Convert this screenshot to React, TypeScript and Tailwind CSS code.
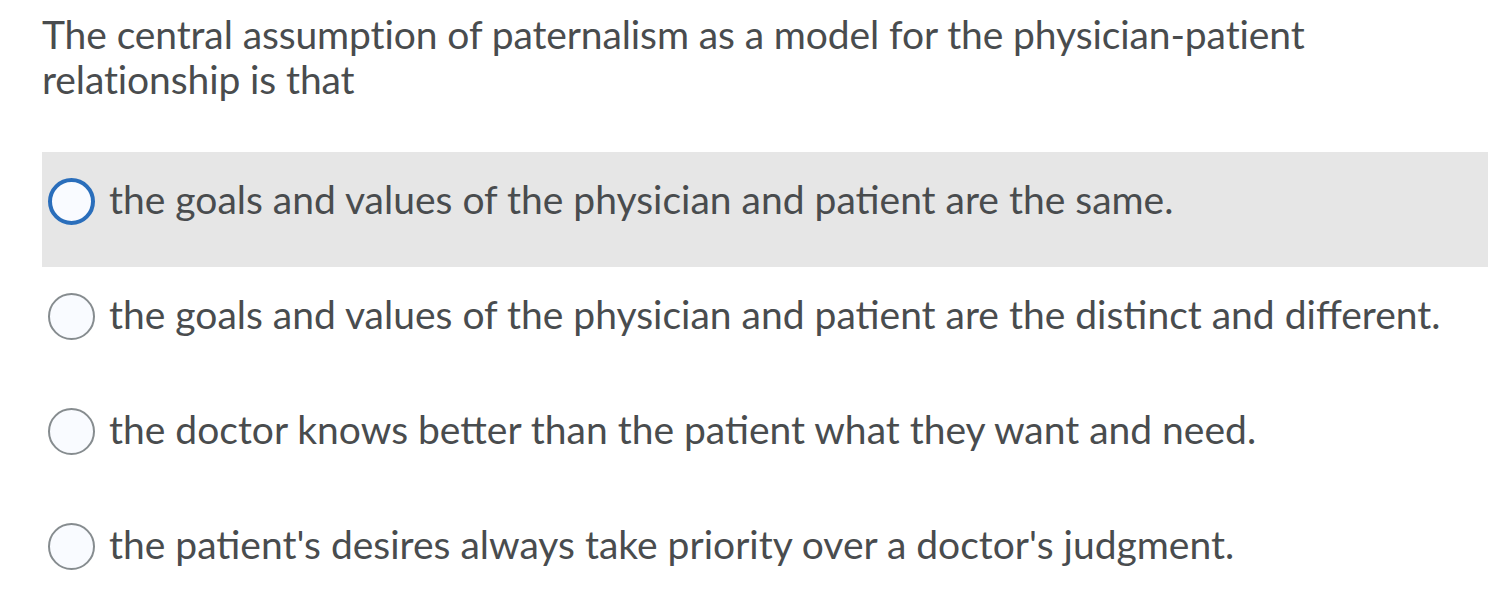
import React from 'react';

const options = [
  'the goals and values of the physician and patient are the same.',
  'the goals and values of the physician and patient are the distinct and different.',
  'the doctor knows better than the patient what they want and need.',
  "the patient's desires always take priority over a doctor's judgment.",
];

export default function App() {
  return (
    <div
      className="min-h-screen bg-white pl-[42px] pr-[4px] pt-[12px] text-[#494c4e]"
      style={{ fontFamily: 'Lato, "Open Sans", sans-serif' }}
    >
      <p className="text-[39px] leading-[45px] tracking-[-0.1px] pr-[140px]">
        The central assumption of paternalism as a model for the physician-patient relationship is that
      </p>
      <div className="mt-[50px] flex flex-col">
        {options.map((text, i) => (
          <label
            key={i}
            className={`flex h-[115px] items-start gap-[14px] pl-[6px] pt-[23px] ${i === 0 ? 'bg-[#e6e6e6]' : ''}`}
          >
            <span
              className={`mt-[3px] h-[47px] w-[47px] shrink-0 rounded-full bg-[#f9fbff] ${
                i === 0 ? 'border-[4px] border-[#2a6ebb]' : 'border-2 border-[#868c8f]'
              }`}
            />
            <span className="mt-[2px] text-[39px] leading-[45px]">{text}</span>
          </label>
        ))}
      </div>
    </div>
  );
}
